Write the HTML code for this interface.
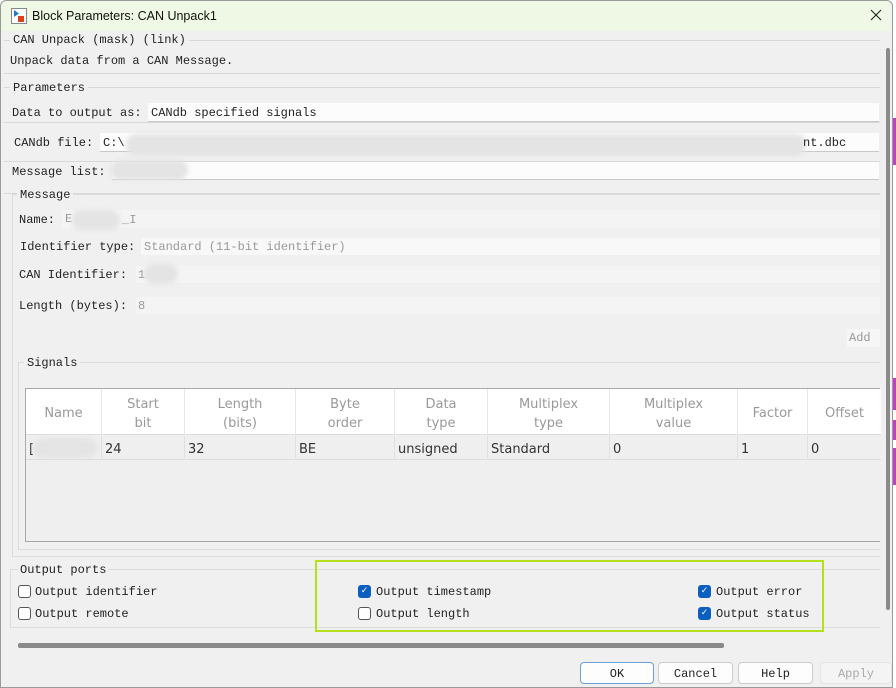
<!DOCTYPE html>
<html><head><meta charset="utf-8"><style>
*{box-sizing:border-box;margin:0;padding:0}
body{width:896px;height:688px;background:#fff;position:relative;overflow:hidden;font-family:"Liberation Mono","Noto Sans CJK SC",monospace;font-size:12px;line-height:19px;color:#222;white-space:nowrap}
.a{position:absolute}
.win{left:0;top:0;width:893px;height:688px;background:#f0f0f0;border:1px solid #9a9a9a;border-radius:6px 6px 0 0}
.title{left:1px;top:1px;width:890px;height:30px;background:#eef8e4;border-radius:6px 6px 0 0;font-family:"Liberation Sans",sans-serif;font-size:12.5px;line-height:15px;color:#111}
.hl{height:1px;background:#d8d8d8}
.field{background:#fcfcfc;border-bottom:1px solid #c8c8c8}
.ro{background:#f4f4f4;color:#999}
.blur{background:#e4e4e4;border-radius:10px;filter:blur(2px)}
.cb{width:13px;height:13px;border:1px solid #555;border-radius:3px;background:#fff}
.cbk{width:13px;height:13px;border-radius:3px;background:#0a5fc0;color:#fff;font-size:9px;line-height:13px;text-align:center;font-family:"DejaVu Sans",sans-serif}
.tbl{font-family:"DejaVu Sans","Liberation Sans",sans-serif;font-size:13px}
.th{top:0;height:46px;color:#999;text-align:center;line-height:19px;padding-top:6px;border-right:1px solid #e6e6e6}
.td{top:47px;height:24px;line-height:27px;padding-left:3px;color:#333;border-right:1px solid #e0e0e0}
.btn{top:662px;height:22px;border:1px solid #ccc;border-radius:4px;background:#fdfdfd;text-align:center;line-height:22px;font-size:12px}
</style></head><body>
<div class="a" style="left:892px;top:118px;width:4px;height:47px;background:#c040c0"></div>
<div class="a" style="left:892px;top:378px;width:4px;height:32px;background:#c040c0"></div>
<div class="a" style="left:892px;top:420px;width:4px;height:20px;background:#c040c0"></div>
<div class="a" style="left:892px;top:448px;width:4px;height:37px;background:#c040c0"></div>
<div class="a win"></div>
<div class="a title">
 <svg class="a" style="left:10px;top:7px" width="16" height="16" viewBox="0 0 16 16"><rect x="0.5" y="0.5" width="15" height="15" fill="#fff" stroke="#888"/><path d="M3 2v7l5-3.5z" fill="#1a7ad0"/><rect x="7" y="8" width="6" height="6" fill="#e0401a"/></svg>
 <div class="a" style="left:31px;top:8px">Block Parameters: CAN Unpack1</div>
 <svg class="a" style="left:869px;top:8px" width="12" height="12" viewBox="0 0 12 12"><path d="M1 1L11 11M11 1L1 11" stroke="#222" stroke-width="1.1"/></svg>
</div>
<div class="a" style="left:886px;top:48px;width:4px;height:562px;background:#8a8a8a;border-radius:2px"></div>
<div class="a hl" style="left:4px;top:40px;width:876px"></div>
<div class="a" style="left:10px;top:31px;background:#f0f0f0;padding:0 3px">CAN Unpack (mask) (link)</div>
<div class="a" style="left:10px;top:52px">Unpack data from a CAN Message.</div>
<div class="a hl" style="left:4px;top:73px;width:876px"></div>
<div class="a hl" style="left:4px;top:87px;width:876px"></div>
<div class="a" style="left:10px;top:79px;background:#f0f0f0;padding:0 3px">Parameters</div>
<div class="a" style="left:12px;top:104px">Data to output as:</div>
<div class="a field" style="left:148px;top:103px;width:731px;height:19px;padding-left:3px;line-height:20px">CANdb specified signals</div>
<div class="a hl" style="left:4px;top:122px;width:876px"></div>
<div class="a" style="left:14px;top:134px">CANdb file:</div>
<div class="a field" style="left:100px;top:133px;width:779px;height:19px;padding-left:3px;line-height:20px">C:\</div>
<div class="a blur" style="left:126px;top:134px;width:680px;height:22px"></div>
<div class="a" style="left:803px;top:134px">nt.dbc</div>
<div class="a hl" style="left:4px;top:161px;width:876px"></div>
<div class="a" style="left:12px;top:163px">Message list:</div>
<div class="a field" style="left:112px;top:162px;width:767px;height:18px"></div>
<div class="a blur" style="left:110px;top:160px;width:78px;height:20px"></div>
<div class="a hl" style="left:4px;top:193px;width:876px"></div>
<div class="a" style="left:12px;top:194px;width:868px;height:363px;border:1px solid #dcdcdc;border-right:none"></div>
<div class="a" style="left:17px;top:186px;background:#f0f0f0;padding:0 3px">Message</div>
<div class="a" style="left:19px;top:211px">Name:</div>
<div class="a ro" style="left:62px;top:210px;width:818px;height:18px;padding-left:3px;line-height:19px">E</div>
<div class="a blur" style="left:72px;top:210px;width:48px;height:20px"></div>
<div class="a" style="left:122px;top:211px;color:#999">_I</div>
<div class="a" style="left:20px;top:238px">Identifier type:</div>
<div class="a ro" style="left:141px;top:238px;width:739px;height:17px;padding-left:3px;line-height:18px;background:#f8f8f8">Standard (11-bit identifier)</div>
<div class="a" style="left:19px;top:266px">CAN Identifier:</div>
<div class="a ro" style="left:136px;top:266px;width:744px;height:17px;padding-left:2px;line-height:18px">1</div>
<div class="a blur" style="left:144px;top:264px;width:34px;height:20px"></div>
<div class="a" style="left:19px;top:297px">Length (bytes):</div>
<div class="a ro" style="left:136px;top:297px;width:744px;height:17px;padding-left:2px;line-height:18px">8</div>
<div class="a" style="left:847px;top:329px;width:33px;height:18px;background:#f6f6f6;color:#999;padding-left:2px;line-height:18px;overflow:hidden">Add :</div>
<div class="a" style="left:18px;top:362px;width:862px;height:188px;border:1px solid #dcdcdc;border-right:none"></div>
<div class="a" style="left:24px;top:354px;background:#f0f0f0;padding:0 3px">Signals</div>
<div class="a tbl" style="left:25px;top:388px;width:855px;height:154px;border:1px solid #a8a8a8;border-right:none;background:#efefef">
 <div class="a" style="left:0;top:0;width:855px;height:46px;background:#fff;border-bottom:1px solid #ddd"></div>
 <div class="a" style="left:0;top:70px;width:855px;height:1px;background:#ddd"></div>
 <div class="a th" style="left:0;width:76px;padding-top:15px">Name</div>
 <div class="a th" style="left:76px;width:83px">Start<br>bit</div>
 <div class="a th" style="left:159px;width:111px">Length<br>(bits)</div>
 <div class="a th" style="left:270px;width:99px">Byte<br>order</div>
 <div class="a th" style="left:369px;width:93px">Data<br>type</div>
 <div class="a th" style="left:462px;width:122px">Multiplex<br>type</div>
 <div class="a th" style="left:584px;width:128px">Multiplex<br>value</div>
 <div class="a th" style="left:712px;width:70px;padding-top:15px">Factor</div>
 <div class="a th" style="left:782px;width:73px;padding-top:15px;border:none">Offset</div>
 <div class="a td" style="left:0;width:76px">[</div>
 <div class="a blur" style="left:7px;top:49px;width:64px;height:20px"></div>
 <div class="a td" style="left:76px;width:83px">24</div>
 <div class="a td" style="left:159px;width:111px">32</div>
 <div class="a td" style="left:270px;width:99px">BE</div>
 <div class="a td" style="left:369px;width:93px">unsigned</div>
 <div class="a td" style="left:462px;width:122px">Standard</div>
 <div class="a td" style="left:584px;width:128px">0</div>
 <div class="a td" style="left:712px;width:70px">1</div>
 <div class="a td" style="left:782px;width:73px;border:none">0</div>
</div>
<div class="a" style="left:10px;top:569px;width:870px;height:59px;border:1px solid #dcdcdc;border-right:none"></div>
<div class="a" style="left:18px;top:561px;background:#f0f0f0;padding:0 2px">Output ports</div>
<div class="a" style="left:315px;top:560px;width:509px;height:72px;border:2px solid #b6e01a"></div>
<div class="a cb" style="left:18px;top:585px"></div><div class="a" style="left:35px;top:583px">Output identifier</div>
<div class="a cb" style="left:18px;top:607px"></div><div class="a" style="left:35px;top:605px">Output remote</div>
<div class="a cbk" style="left:358px;top:585px">✓</div><div class="a" style="left:376px;top:583px">Output timestamp</div>
<div class="a cb" style="left:358px;top:607px"></div><div class="a" style="left:376px;top:605px">Output length</div>
<div class="a cbk" style="left:698px;top:585px">✓</div><div class="a" style="left:716px;top:583px">Output error</div>
<div class="a cbk" style="left:698px;top:607px">✓</div><div class="a" style="left:716px;top:605px">Output status</div>
<div class="a" style="left:18px;top:643px;width:706px;height:5px;background:#8a8a8a;border-radius:2px"></div>
<div class="a btn" style="left:580px;width:74px;border-color:#6aa0d8">OK</div>
<div class="a btn" style="left:658px;width:75px">Cancel</div>
<div class="a btn" style="left:738px;width:75px">Help</div>
<div class="a btn" style="left:820px;width:72px;color:#aaa;background:#f4f4f4;border-color:#e4e4e4">Apply</div>
</body></html>
